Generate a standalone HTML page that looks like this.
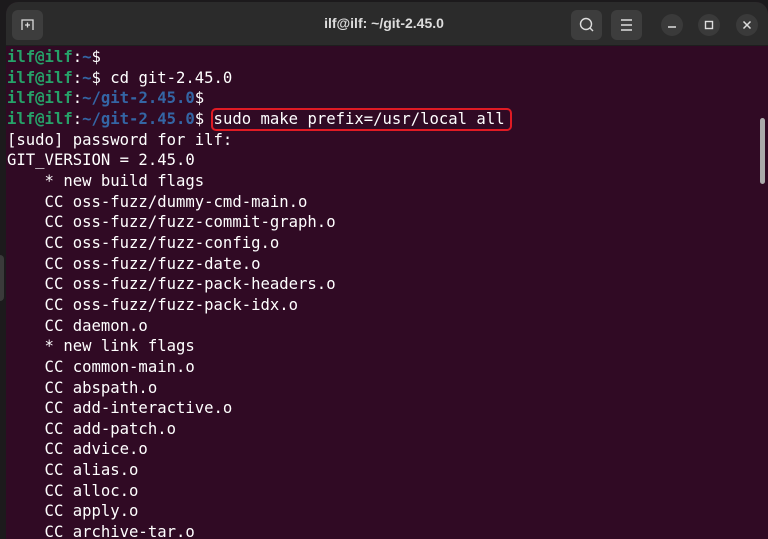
<!DOCTYPE html><html style="width:768px;height:539px;overflow:hidden"><head><style>
body{margin:0;width:768px;height:539px;overflow:hidden;background:#1c1a1c;position:relative;font-family:"DejaVu Sans Mono","Liberation Mono",monospace}
.win{position:absolute;left:6px;top:2px;width:762px;height:537px;background:#300a24;border-radius:12px 12px 0 0;overflow:hidden}
.hdr{position:absolute;left:0;top:0;right:0;height:43px;background:#2b2b2b;border-bottom:1px solid #1e1e1e}
.btn{position:absolute;top:8px;width:31px;height:30px;background:#3d3d3d;border-radius:6px}
.circ{position:absolute;top:12px;width:22px;height:22px;border-radius:50%;background:#3a3a3a}
.title{position:absolute;top:13px;left:0;width:756px;text-align:center;color:#ddd;font:bold 14px "Liberation Sans",sans-serif}
pre{position:absolute;left:1px;top:45px;margin:0;font-size:15.6px;line-height:20.65px;color:#fff;font-family:"DejaVu Sans Mono",monospace}
.g{color:#26a269;font-weight:bold}.b{color:#3465a4;font-weight:bold}
.box{position:absolute;width:297px;height:19px;border:2px solid #e01b24;border-radius:5px}
.sb{position:absolute;width:5px;height:66px;background:#aaa;border-radius:3px}
</style></head><body>
<div style="position:absolute;left:0;top:255px;width:4px;height:46px;background:#3a3a3a;border-radius:0 4px 4px 0"></div>
<div class="win">
<div class="hdr">
<div class="btn" style="left:6px"><svg width="31" height="30"><path d="M10 20V10h11v10M15.5 12.5v5M13 15h5" stroke="#ddd" stroke-width="1.3" fill="none"/></svg></div>
<div class="title">ilf@ilf: ~/git-2.45.0</div>
<div class="btn" style="left:565px"><svg width="31" height="30"><circle cx="15" cy="14" r="5.5" stroke="#ddd" stroke-width="1.4" fill="none"/><path d="M19 18l3 3" stroke="#ddd" stroke-width="1.4"/></svg></div>
<div class="btn" style="left:605px"><svg width="31" height="30"><path d="M10 10h11M10 15h11M10 20h11" stroke="#ddd" stroke-width="1.4"/></svg></div>
<div class="circ" style="left:655px"><svg width="22" height="22"><path d="M7 13h8" stroke="#ddd" stroke-width="1.4"/></svg></div>
<div class="circ" style="left:692px"><svg width="22" height="22"><rect x="7.5" y="7.5" width="7" height="7" stroke="#ddd" stroke-width="1.4" fill="none"/></svg></div>
<div class="circ" style="left:730px"><svg width="22" height="22"><path d="M7.5 7.5l7 7M14.5 7.5l-7 7" stroke="#ddd" stroke-width="1.5"/></svg></div>
</div>
<pre><span class="g">ilf@ilf</span>:<span class="b">~</span>$
<span class="g">ilf@ilf</span>:<span class="b">~</span>$ cd git-2.45.0
<span class="g">ilf@ilf</span>:<span class="b">~/git-2.45.0</span>$
<span class="g">ilf@ilf</span>:<span class="b">~/git-2.45.0</span>$ sudo make prefix=/usr/local all
[sudo] password for ilf:
GIT_VERSION = 2.45.0
    * new build flags
    CC oss-fuzz/dummy-cmd-main.o
    CC oss-fuzz/fuzz-commit-graph.o
    CC oss-fuzz/fuzz-config.o
    CC oss-fuzz/fuzz-date.o
    CC oss-fuzz/fuzz-pack-headers.o
    CC oss-fuzz/fuzz-pack-idx.o
    CC daemon.o
    * new link flags
    CC common-main.o
    CC abspath.o
    CC add-interactive.o
    CC add-patch.o
    CC advice.o
    CC alias.o
    CC alloc.o
    CC apply.o
    CC archive-tar.o</pre>
<div class="box" style="left:205px;top:106px"></div>
<div class="sb" style="left:754px;top:116px"></div>
</div>
</body></html>
